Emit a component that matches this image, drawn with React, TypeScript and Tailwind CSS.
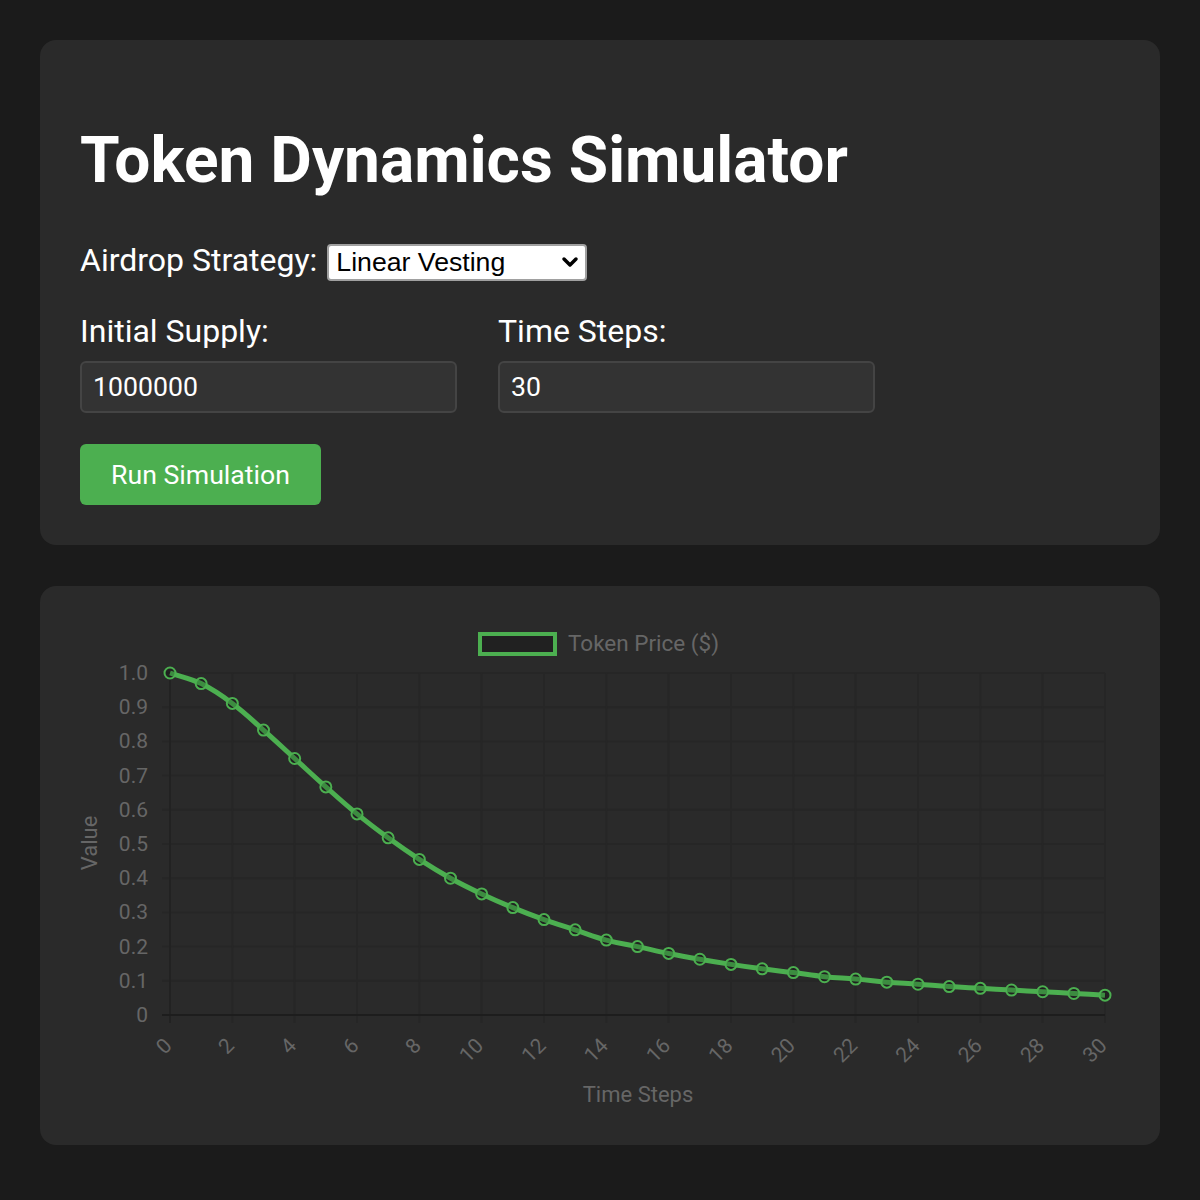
import { ChevronDown } from 'lucide-react';

// price series read off the simulation output
const prices = [
  1.0, 0.969, 0.911, 0.833, 0.75, 0.667, 0.588, 0.518, 0.455, 0.4, 0.354, 0.314, 0.279, 0.249,
  0.219, 0.2, 0.18, 0.163, 0.148, 0.135, 0.124, 0.112, 0.105, 0.096, 0.09, 0.083, 0.078, 0.073,
  0.068, 0.063, 0.058,
];

const W = 1040;
const H = 479;
const left = 90;
const right = 1025;
const top = 47;
const bottom = 389;

const px = (i: number) => left + (i * (right - left)) / 30;
const py = (v: number) => bottom - v * (bottom - top);

// same control points as chart.js with tension 0.4
const buildPath = () => {
  const pts = prices.map((v, i) => ({ x: px(i), y: py(v) }));
  const t = 0.4;
  const cps = pts.map((cur, i) => {
    const prev = pts[i - 1] ?? cur;
    const next = pts[i + 1] ?? cur;
    const d01 = Math.hypot(cur.x - prev.x, cur.y - prev.y);
    const d12 = Math.hypot(next.x - cur.x, next.y - cur.y);
    let s01 = d01 / (d01 + d12);
    let s12 = d12 / (d01 + d12);
    if (isNaN(s01)) s01 = 0;
    if (isNaN(s12)) s12 = 0;
    const fa = t * s01;
    const fb = t * s12;
    return {
      prev: { x: cur.x - fa * (next.x - prev.x), y: cur.y - fa * (next.y - prev.y) },
      next: { x: cur.x + fb * (next.x - prev.x), y: cur.y + fb * (next.y - prev.y) },
    };
  });
  let d = `M${pts[0].x},${pts[0].y}`;
  for (let i = 1; i < pts.length; i++) {
    const a = cps[i - 1].next;
    const b = cps[i].prev;
    d += ` C${a.x},${a.y} ${b.x},${b.y} ${pts[i].x},${pts[i].y}`;
  }
  return d;
};

const yTicks = [1.0, 0.9, 0.8, 0.7, 0.6, 0.5, 0.4, 0.3, 0.2, 0.1, 0];
const xTicks = Array.from({ length: 16 }, (_, i) => i * 2);

const PriceChart = () => (
  <svg width={W} height={H} viewBox={`0 0 ${W} ${H}`} overflow="visible" className="block">
    {/* grid */}
    {yTicks.map((v) => (
      <line key={`h${v}`} x1={82} x2={right} y1={py(v)} y2={py(v)} stroke="#262626" strokeWidth={2} />
    ))}
    {xTicks.map((i) => (
      <line key={`v${i}`} x1={px(i)} x2={px(i)} y1={top} y2={bottom + 8} stroke="#262626" strokeWidth={2} />
    ))}
    <line x1={left} x2={left} y1={top} y2={bottom + 8} stroke="#222" strokeWidth={2} />
    <line x1={82} x2={right} y1={bottom} y2={bottom} stroke="#1d1d1d" strokeWidth={2} />

    {/* legend */}
    <rect x={400} y={8} width={75} height={20} fill="rgba(0,0,0,0.2)" stroke="#4caf50" strokeWidth={4} />
    <text x={488} y={25} fill="#666" fontSize={22.5} fontFamily="Roboto, sans-serif">
      Token Price ($)
    </text>

    {/* y ticks */}
    {yTicks.map((v) => (
      <text
        key={`yt${v}`}
        x={68}
        y={py(v)}
        textAnchor="end"
        dominantBaseline="central"
        fill="#666"
        fontSize={21}
        fontFamily="Roboto, sans-serif"
      >
        {v === 0 ? '0' : v.toFixed(1)}
      </text>
    ))}

    {/* x ticks */}
    {xTicks.map((i) => (
      <text
        key={`xt${i}`}
        x={px(i) + 3}
        y={421}
        transform={`rotate(-45 ${px(i) + 3} 421)`}
        textAnchor="end"
        fill="#666"
        fontSize={21}
        fontFamily="Roboto, sans-serif"
      >
        {i}
      </text>
    ))}

    {/* axis titles */}
    <text
      x={9}
      y={217}
      transform="rotate(-90 9 217)"
      textAnchor="middle"
      dominantBaseline="central"
      fill="#666"
      fontSize={22}
      fontFamily="Roboto, sans-serif"
    >
      Value
    </text>
    <text
      x={558}
      y={468}
      textAnchor="middle"
      dominantBaseline="central"
      fill="#666"
      fontSize={22}
      fontFamily="Roboto, sans-serif"
    >
      Time Steps
    </text>

    {/* series */}
    <path d={buildPath()} fill="none" stroke="#4caf50" strokeWidth={5} strokeLinejoin="round" />
    {prices.map((v, i) => (
      <circle key={`p${i}`} cx={px(i)} cy={py(v)} r={5.5} fill="rgba(0,0,0,0.2)" stroke="#4caf50" strokeWidth={2} />
    ))}
  </svg>
);

const App = () => {
  return (
    <div className="min-h-screen bg-[#1b1b1b] p-[40px] font-['Roboto',sans-serif] text-white">
      <div className="flex flex-col gap-[41px]">
        <div className="rounded-[16px] bg-[#2a2a2a] px-[40px] pt-[40px] pb-[40px]">
          <h1 className="mt-[43px] mb-[43px] text-[64px] leading-[75px] font-bold">Token Dynamics Simulator</h1>

          <div className="mb-[33px] flex h-[38px] items-baseline gap-[10px]">
            <label className="text-[32px] leading-[38px]">Airdrop Strategy:</label>
            <div className="relative">
              <select
                defaultValue="linear"
                className="h-[37px] w-[260px] appearance-none rounded-[4px] border-2 border-[#a0a0a0] bg-white pl-[7px] font-['Liberation_Sans',Arial,sans-serif] text-[26.67px] leading-[30px] text-black outline-none"
              >
                <option value="linear">Linear Vesting</option>
                <option value="cliff">Cliff Vesting</option>
                <option value="instant">Instant Airdrop</option>
              </select>
              <ChevronDown
                size={24}
                strokeWidth={3.5}
                className="pointer-events-none absolute top-[6px] right-[5px] text-black"
              />
            </div>
          </div>

          <div className="flex gap-[41px]">
            <div className="w-[377px]">
              <label className="block text-[32px] leading-[38px]">Initial Supply:</label>
              <input
                type="number"
                defaultValue={1000000}
                className="mt-[11px] h-[52px] w-full rounded-[6px] border-2 border-[#444] bg-[#333] px-[11px] text-[26.67px] text-white outline-none"
              />
            </div>
            <div className="w-[377px]">
              <label className="block text-[32px] leading-[38px]">Time Steps:</label>
              <input
                type="number"
                defaultValue={30}
                className="mt-[11px] h-[52px] w-full rounded-[6px] border-2 border-[#444] bg-[#333] px-[11px] text-[26.67px] text-white outline-none"
              />
            </div>
          </div>

          <button className="mt-[31px] h-[61px] w-[241px] rounded-[6px] bg-[#4caf50] text-[26.67px] text-white">
            Run Simulation
          </button>
        </div>

        <div className="rounded-[16px] bg-[#2a2a2a] p-[40px]">
          <PriceChart />
        </div>
      </div>
    </div>
  );
};

export default App;
